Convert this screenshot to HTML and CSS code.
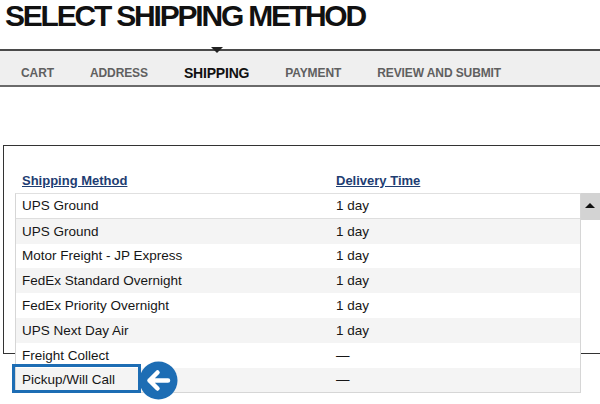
FILE: index.html
```html
<!DOCTYPE html>
<html>
<head>
    <title>Select Shipping Method</title>
    <link rel="stylesheet" href="styles.css">
</head>
<body>

<h1 class="page-title">SELECT SHIPPING METHOD</h1>

<ul class="steps">
    <li>CART</li>
    <li>ADDRESS</li>
    <li class="active">SHIPPING</li>
    <li>PAYMENT</li>
    <li>REVIEW AND SUBMIT</li>
</ul>

<div class="panel">
    <div class="col-heads">
        <a href="#" class="col-method">Shipping Method</a>
        <a href="#" class="col-time">Delivery Time</a>
    </div>

    <div class="dropdown">
        <div class="options">
            <div class="option selected"><span class="col-method">UPS Ground</span><span class="col-time">1 day</span></div>
            <div class="option"><span class="col-method">UPS Ground</span><span class="col-time">1 day</span></div>
            <div class="option"><span class="col-method">Motor Freight - JP Express</span><span class="col-time">1 day</span></div>
            <div class="option"><span class="col-method">FedEx Standard Overnight</span><span class="col-time">1 day</span></div>
            <div class="option"><span class="col-method">FedEx Priority Overnight</span><span class="col-time">1 day</span></div>
            <div class="option"><span class="col-method">UPS Next Day Air</span><span class="col-time">1 day</span></div>
            <div class="option"><span class="col-method">Freight Collect</span><span class="col-time">&mdash;</span></div>
            <div class="option callout-row">
                <span class="col-method">Pickup/Will Call</span><span class="col-time">&mdash;</span>
                <div class="callout">
                    <svg class="callout-arrow" width="39" height="39" viewBox="0 0 39 39">
                        <circle cx="19.5" cy="19.5" r="19" fill="#1d6db4"/>
                        <path d="M29 19.5 H10.5 M18.5 11.5 L10.5 19.5 L18.5 27.5" fill="none" stroke="#fff" stroke-width="4.5" stroke-linecap="round" stroke-linejoin="round"/>
                    </svg>
                </div>
            </div>
        </div>
        <div class="scrollbar">
            <div class="scroll-up"></div>
        </div>
    </div>
</div>

</body>
</html>
```

FILE: styles.css
```css
html, body {
    margin: 0;
    padding: 0;
    background: #fff;
    font-family: "Liberation Sans", Arial, sans-serif;
    color: #1a1a1a;
}

body {
    min-height: 404px;
}

.page-title {
    margin: 0;
    padding: 0 0 0 5px;
    height: 49px;
    box-sizing: border-box;
    font-size: 30px;
    font-weight: bold;
    letter-spacing: -2.2px;
    color: #111;
    line-height: 32px;
}

.steps {
    list-style: none;
    margin: 0;
    padding: 0 0 0 21px;
    height: 38px;
    display: flex;
    align-items: center;
    gap: 36px;
    background-color: #efefef;
    border-top: 2px solid #4a4a4a;
    border-bottom: 2px solid #6a6a6a;
    box-sizing: border-box;
}

.steps li {
    font-size: 12px;
    font-weight: bold;
    letter-spacing: -0.1px;
    color: #606060;
    padding-top: 9px;
}

.steps li.active {
    position: relative;
    font-size: 14px;
    letter-spacing: -0.2px;
    color: #111;
}

.steps li.active::before {
    content: "";
    position: absolute;
    top: -9px;
    left: 50%;
    margin-left: -6px;
    border-left: 6px solid transparent;
    border-right: 6px solid transparent;
    border-top: 6px solid #222;
}

.panel {
    margin: 58px 0 0 3px;
    height: 209px;
    box-sizing: border-box;
    padding: 27px 0 0 11px;
    border-top: 1px solid #333;
    border-left: 1px solid #333;
    border-bottom: 1px solid #333;
}

.col-heads {
    display: flex;
    height: 20px;
    padding-left: 7px;
    font-size: 13px;
    font-weight: bold;
}

.col-heads a {
    color: #1e3d72;
}

.col-method {
    width: 314px;
    display: inline-block;
}

.dropdown {
    display: flex;
    align-items: flex-start;
}

.options {
    width: 566px;
    flex-shrink: 0;
    box-sizing: border-box;
    border: 1px solid #d6d6d6;
    border-top-color: #e0e0e0;
    background: #fff;
}

.option {
    display: flex;
    align-items: center;
    height: 24.8px;
    padding-left: 6px;
    font-size: 13.5px;
    color: #161616;
}

.option:nth-child(even) {
    background-color: #f4f4f4;
}

.option.selected {
    border-bottom: 1px solid #dedede;
    box-sizing: border-box;
}

.callout-row {
    position: relative;
}

.callout {
    position: absolute;
    left: -4px;
    top: -4px;
    width: 123px;
    height: 23px;
    border: 3.5px solid #1d6db4;
}

.callout-arrow {
    position: absolute;
    left: 124px;
    top: -6px;
}

.scrollbar {
    width: 19px;
    flex-shrink: 0;
}

.scroll-up {
    height: 27px;
    background-color: #d3d3d3;
    position: relative;
}

.scroll-up::after {
    content: "";
    position: absolute;
    top: 10px;
    left: 4px;
    border-left: 5px solid transparent;
    border-right: 5px solid transparent;
    border-bottom: 5px solid #111;
}
```
